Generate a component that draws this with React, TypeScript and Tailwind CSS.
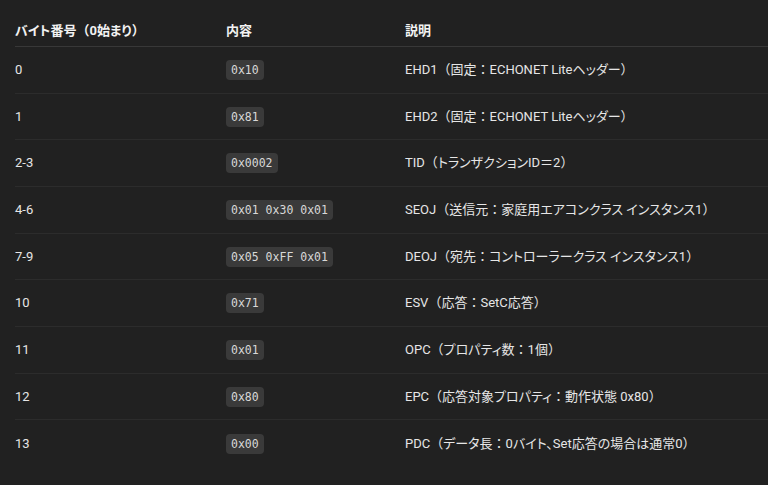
const rows = [
  { byte: "0", code: "0x10", desc: "EHD1（固定：ECHONET Liteヘッダー）" },
  { byte: "1", code: "0x81", desc: "EHD2（固定：ECHONET Liteヘッダー）" },
  { byte: "2-3", code: "0x0002", desc: "TID（トランザクションID＝2）" },
  { byte: "4-6", code: "0x01 0x30 0x01", desc: "SEOJ（送信元：家庭用エアコンクラス インスタンス1）" },
  { byte: "7-9", code: "0x05 0xFF 0x01", desc: "DEOJ（宛先：コントローラークラス インスタンス1）" },
  { byte: "10", code: "0x71", desc: "ESV（応答：SetC応答）" },
  { byte: "11", code: "0x01", desc: "OPC（プロパティ数：1個）" },
  { byte: "12", code: "0x80", desc: "EPC（応答対象プロパティ：動作状態 0x80）" },
  { byte: "13", code: "0x00", desc: "PDC（データ長：0バイト、Set応答の場合は通常0）" },
]

// 全角の括弧とコロンは詰めずに表示する
function Jp({ text }: { text: string }) {
  const parts = text.split(/([（）：＝])/)
  return (
    <>
      {parts.map((p, i) =>
        /^[（）：＝]$/.test(p) ? (
          <span key={i} className="[font-feature-settings:normal]">
            {p}
          </span>
        ) : (
          <span key={i}>{p}</span>
        )
      )}
    </>
  )
}

export default function App() {
  return (
    <div className="min-h-[485px] w-full bg-[#212121] pl-[15px] pt-4 text-[13px] text-[#e6e6e6] font-['Roboto','Noto_Sans_CJK_JP',sans-serif] [font-feature-settings:'palt']">
      {/* ヘッダー */}
      <div className="grid h-[31px] grid-cols-[211px_179px_1fr] items-center border-b border-[#383838] pb-px font-bold text-[#f2f2f2]">
        <div>
          <Jp text="バイト番号（0始まり）" />
        </div>
        <div>内容</div>
        <div>説明</div>
      </div>

      {rows.map((row, i) => (
        <div
          key={i}
          className={
            "grid h-[46.67px] grid-cols-[211px_179px_1fr] items-center " +
            (i < rows.length - 1 ? "border-b border-[#2c2c2c]" : "")
          }
        >
          <div>{row.byte}</div>
          <div>
            <span className="rounded-[4px] bg-[#3a3a3a] px-[5px] py-[3px] font-['DejaVu_Sans_Mono',monospace] text-[11.5px] text-[#d8d8d8] [font-feature-settings:normal]">
              {row.code}
            </span>
          </div>
          <div>
            <Jp text={row.desc} />
          </div>
        </div>
      ))}
    </div>
  )
}
